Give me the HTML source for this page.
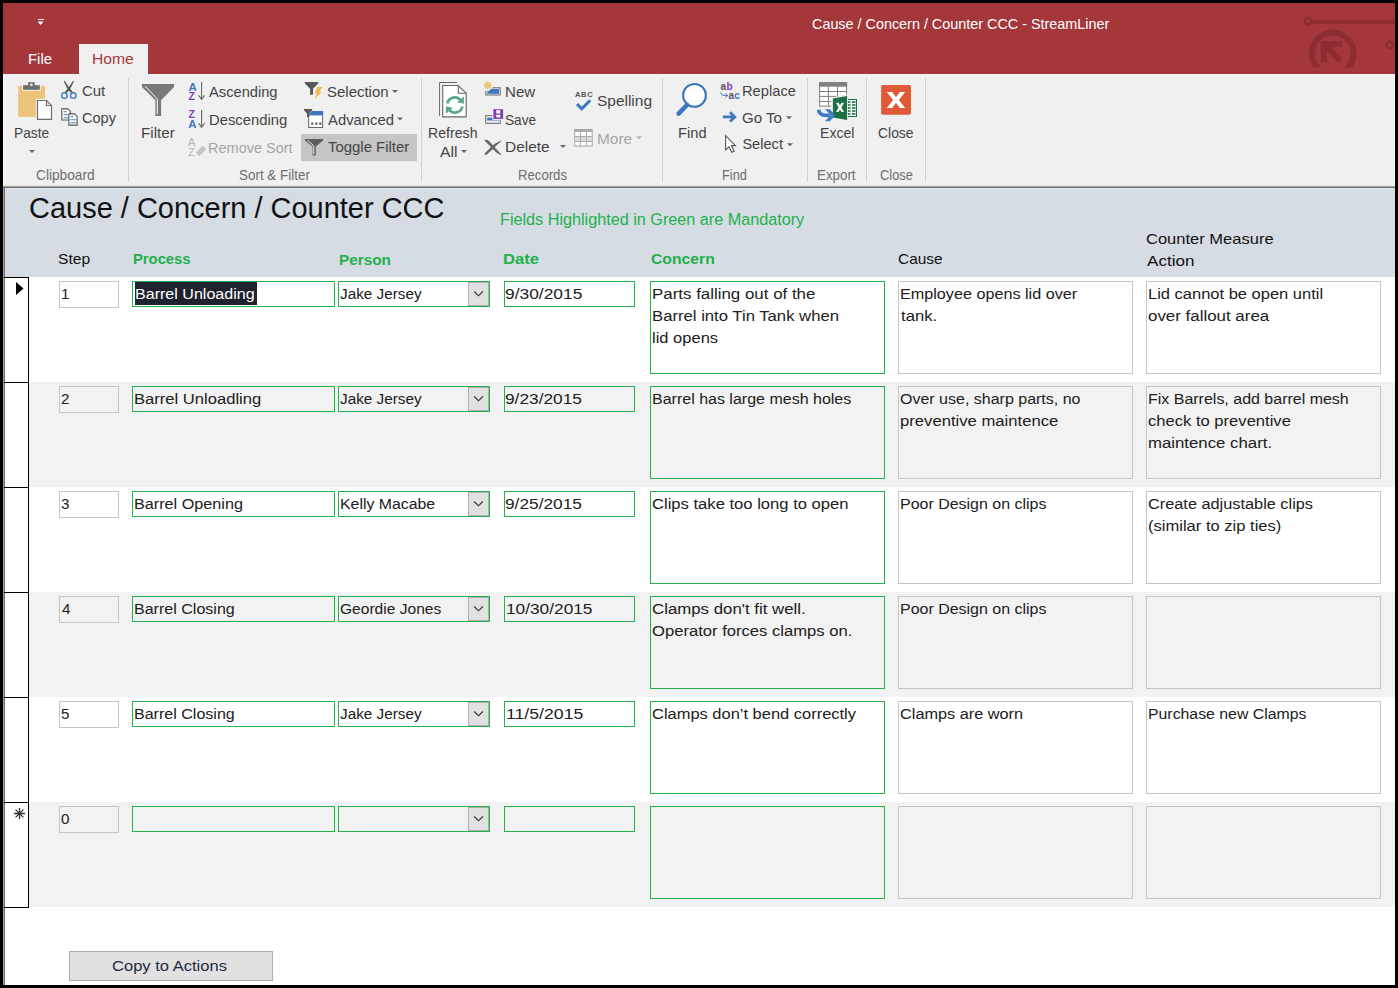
<!DOCTYPE html>
<html><head><meta charset="utf-8"><style>
html,body{margin:0;padding:0;}
body{width:1398px;height:988px;background:#000;position:relative;overflow:hidden;font-family:"Liberation Sans",sans-serif;}
.t{position:absolute;white-space:nowrap;line-height:1;transform-origin:0 0;}
.s{}
.b{position:absolute;box-sizing:border-box;}
svg.b{overflow:visible;}
</style></head><body>
<div class="b" style="left:3px;top:3px;width:1392px;height:71px;background:#A4373A;"></div>
<div class="b" style="left:38px;top:19px;width:6px;height:1px;background:#FFFFFF;"></div>
<svg class="b" style="left:37px;top:21px" width="8" height="5"><path d="M0.5 0.5 H6.5 L3.5 4 Z" fill="#fff"/></svg>
<div class="t" style="left:812.20px;top:17px;font-size:14.5px;color:#FFFFFF;transform:scaleX(0.9915);">Cause / Concern / Counter CCC - StreamLiner</div>
<svg class="b" style="left:1295px;top:10px" width="100" height="64">
<defs><clipPath id="cpa"><rect x="0" y="0" width="100" height="57.5"/></clipPath></defs>
<circle cx="13.2" cy="11.2" r="3.3" fill="none" stroke="#8E2D31" stroke-width="2.4"/>
<rect x="16.3" y="9.8" width="84" height="4" fill="#8E2D31"/>
<circle cx="37.7" cy="43.4" r="20.8" fill="none" stroke="#8E2D31" stroke-width="6" clip-path="url(#cpa)"/>
<rect x="25.8" y="31.2" width="6" height="21.3" fill="#8E2D31"/>
<rect x="25.8" y="31.2" width="21.2" height="6" fill="#8E2D31"/>
<path d="M29 34.3 L45.2 50.5" stroke="#8E2D31" stroke-width="6"/>
<circle cx="94.7" cy="34.8" r="3.3" fill="none" stroke="#8E2D31" stroke-width="2.4"/>
</svg>
<div class="t" style="left:28.42px;top:52px;font-size:14.8px;color:#FFFFFF;transform:scaleX(1.0087);">File</div>
<div class="b" style="left:79px;top:44px;width:69px;height:31px;background:#F0F0F0;"></div>
<div class="t" style="left:91.56px;top:52px;font-size:14.8px;color:#A4373A;transform:scaleX(1.0570);">Home</div>
<div class="b" style="left:3px;top:74px;width:1392px;height:114px;background:#F0F0F0;"></div>
<div class="b" style="left:3px;top:74px;width:1px;height:111px;background:#FFFFFF;"></div>
<div class="b" style="left:1394px;top:74px;width:1px;height:111px;background:#FFFFFF;"></div>
<div class="b" style="left:3px;top:185px;width:1392px;height:1px;background:#E4E4E2;"></div>
<div class="b" style="left:3px;top:186px;width:1392px;height:1px;background:#A5A5A0;"></div>
<div class="b" style="left:3px;top:187px;width:1392px;height:1px;background:#6B6D70;"></div>
<div class="b" style="left:128px;top:78px;width:1px;height:104px;background:#D2D2D2;"></div>
<div class="b" style="left:421px;top:78px;width:1px;height:104px;background:#D2D2D2;"></div>
<div class="b" style="left:662px;top:78px;width:1px;height:104px;background:#D2D2D2;"></div>
<div class="b" style="left:807px;top:78px;width:1px;height:104px;background:#D2D2D2;"></div>
<div class="b" style="left:866px;top:78px;width:1px;height:104px;background:#D2D2D2;"></div>
<div class="b" style="left:925px;top:78px;width:1px;height:104px;background:#D2D2D2;"></div>
<div class="t" style="left:35.60px;top:168px;font-size:14.6px;color:#6E6E6E;transform:scaleX(0.9376);">Clipboard</div>
<div class="t" style="left:239.20px;top:168px;font-size:14.6px;color:#6E6E6E;transform:scaleX(0.9201);">Sort &amp; Filter</div>
<div class="t" style="left:517.70px;top:168px;font-size:14.6px;color:#6E6E6E;transform:scaleX(0.9013);">Records</div>
<div class="t" style="left:722.37px;top:168px;font-size:14.6px;color:#6E6E6E;transform:scaleX(0.8746);">Find</div>
<div class="t" style="left:817.49px;top:168px;font-size:14.6px;color:#6E6E6E;transform:scaleX(0.9146);">Export</div>
<div class="t" style="left:879.60px;top:168px;font-size:14.6px;color:#6E6E6E;transform:scaleX(0.8837);">Close</div>
<div class="b" style="left:301px;top:134px;width:116px;height:27px;background:#C5C5C5;"></div>
<div class="t" style="left:14.27px;top:126px;font-size:14.6px;color:#444444;transform:scaleX(0.9396);">Paste</div>
<div class="t" style="left:82.20px;top:84px;font-size:14.6px;color:#444444;transform:scaleX(1.0184);">Cut</div>
<div class="t" style="left:82.20px;top:111px;font-size:14.6px;color:#444444;transform:scaleX(0.9968);">Copy</div>
<div class="t" style="left:140.58px;top:126px;font-size:14.6px;color:#444444;transform:scaleX(1.0392);">Filter</div>
<div class="t" style="left:209.00px;top:85px;font-size:14.6px;color:#444444;transform:scaleX(1.0056);">Ascending</div>
<div class="t" style="left:208.99px;top:113px;font-size:14.6px;color:#444444;transform:scaleX(1.0138);">Descending</div>
<div class="t" style="left:208.00px;top:141px;font-size:14.6px;color:#A6A6A6;transform:scaleX(0.9940);">Remove Sort</div>
<div class="t" style="left:326.60px;top:85px;font-size:14.6px;color:#444444;transform:scaleX(1.0257);">Selection</div>
<div class="t" style="left:327.60px;top:113px;font-size:14.6px;color:#444444;transform:scaleX(1.0156);">Advanced</div>
<div class="t" style="left:328.00px;top:140px;font-size:14.6px;color:#444444;transform:scaleX(1.0223);">Toggle Filter</div>
<div class="t" style="left:428.05px;top:126px;font-size:14.6px;color:#444444;transform:scaleX(0.9687);">Refresh</div>
<div class="t" style="left:439.80px;top:145px;font-size:14.6px;color:#444444;transform:scaleX(1.0787);">All</div>
<div class="t" style="left:505.39px;top:85px;font-size:14.6px;color:#444444;transform:scaleX(1.0338);">New</div>
<div class="t" style="left:505.40px;top:113px;font-size:14.6px;color:#444444;transform:scaleX(0.9363);">Save</div>
<div class="t" style="left:505.35px;top:140px;font-size:14.6px;color:#444444;transform:scaleX(1.0568);">Delete</div>
<div class="t" style="left:597.20px;top:94px;font-size:14.6px;color:#444444;transform:scaleX(1.0592);">Spelling</div>
<div class="t" style="left:597.14px;top:132px;font-size:14.6px;color:#A6A6A6;transform:scaleX(1.0581);">More</div>
<div class="t" style="left:677.62px;top:126px;font-size:14.6px;color:#444444;transform:scaleX(1.0057);">Find</div>
<div class="t" style="left:742.40px;top:84px;font-size:14.6px;color:#444444;transform:scaleX(1.0072);">Replace</div>
<div class="t" style="left:742.40px;top:111px;font-size:14.6px;color:#444444;transform:scaleX(1.0333);">Go To</div>
<div class="t" style="left:742.40px;top:137px;font-size:14.6px;color:#444444;">Select</div>
<div class="t" style="left:819.66px;top:126px;font-size:14.6px;color:#444444;transform:scaleX(0.9644);">Excel</div>
<div class="t" style="left:877.80px;top:126px;font-size:14.6px;color:#444444;transform:scaleX(0.9532);">Close</div>
<svg class="b" style="left:0;top:0" width="1398" height="190" viewBox="0 0 1398 190">
<!-- Paste -->
<rect x="18.2" y="85.9" width="26.8" height="31" fill="#EBC47A"/>
<rect x="22.2" y="84.4" width="18.6" height="6.4" fill="#F0F0F0"/>
<rect x="23.1" y="85.2" width="16.7" height="4.6" fill="#6E6E6E"/>
<rect x="28.2" y="82.2" width="6.5" height="4" fill="#6E6E6E"/>
<rect x="30.3" y="83.6" width="2.3" height="2.3" fill="#F5F5F5"/>
<path d="M35.8 98.8 H47 L53.2 105 V121 H35.8 Z" fill="#F0F0F0"/>
<path d="M37.5 100.5 H46.5 L51.5 105.5 V119.3 H37.5 Z" fill="#fff" stroke="#6E6E6E" stroke-width="1.2"/>
<path d="M46.5 100.5 V105.5 H51.5" fill="none" stroke="#6E6E6E" stroke-width="1.2"/>
<path d="M29 150 H35 L32 153 Z" fill="#666"/>
<!-- Cut -->
<path d="M63.6 81 L64.8 81 L69.6 88.2 L73.2 92.6 L71.6 93.4 L67.8 89.4 Z" fill="#555"/>
<path d="M74.1 81 L72.9 81 L68.1 88.2 L64.5 92.6 L66.1 93.4 L69.9 89.4 Z" fill="#555"/>
<circle cx="64.4" cy="95.6" r="2.8" fill="none" stroke="#3F7EC4" stroke-width="1.4"/>
<circle cx="73.3" cy="95.6" r="2.8" fill="none" stroke="#3F7EC4" stroke-width="1.4"/>
<!-- Copy -->
<path d="M61.8 108.9 H67.8 L70.3 111.4 V120 H61.8 Z" fill="#fff" stroke="#555" stroke-width="1.1"/>
<path d="M63.5 111.8 H66.5 M63.5 114.8 H68.5 M63.5 117.8 H68.5" stroke="#3F7EC4" stroke-width="1.1"/>
<path d="M68.9 113.9 H74.6 L77.1 116.4 V125.1 H68.9 Z" fill="#fff" stroke="#555" stroke-width="1.1"/>
<path d="M70.5 116.8 H73.5 M70.5 119.8 H75.8 M70.5 122.8 H75.8" stroke="#3F7EC4" stroke-width="1.1"/>
<!-- Filter -->
<path d="M142 84 H174 V87 L161.1 100.2 V116 H155.4 V100.2 L142 87 Z" fill="#787878"/>
<path d="M145 86.2 L157.3 99 V114.2" fill="none" stroke="#fff" stroke-width="1"/>
<!-- Ascending -->
<text x="188.4" y="90.6" font-family="Liberation Sans" font-weight="bold" font-size="11.5" fill="#3A77BD">A</text>
<text x="188.6" y="99.8" font-family="Liberation Sans" font-weight="bold" font-size="10.5" fill="#8A3AB9">Z</text>
<path d="M201.6 82 V99" stroke="#666" stroke-width="1.1"/>
<path d="M198.6 95.3 L201.6 99.3 L204.6 95.3" fill="none" stroke="#666" stroke-width="1.1"/>
<!-- Descending -->
<text x="188.6" y="118" font-family="Liberation Sans" font-weight="bold" font-size="10.5" fill="#8A3AB9">Z</text>
<text x="188.2" y="127.8" font-family="Liberation Sans" font-weight="bold" font-size="11.5" fill="#3A77BD">A</text>
<path d="M201.6 110 V127" stroke="#666" stroke-width="1.1"/>
<path d="M198.6 123.3 L201.6 127.3 L204.6 123.3" fill="none" stroke="#666" stroke-width="1.1"/>
<!-- Remove sort -->
<text x="188" y="146.4" font-family="Liberation Sans" font-size="11" fill="#B4B4B4">A</text>
<text x="188.3" y="156" font-family="Liberation Sans" font-size="10.5" fill="#B4B4B4">Z</text>
<path d="M197.5 154.5 L204.5 147.5" stroke="#C4C4C4" stroke-width="4.6"/>
<!-- Selection -->
<path d="M304.9 82.1 H318.2 V83.5 L313 88.8 V94.8 H310.1 V88.8 L304.9 83.5 Z" fill="#585858"/>
<path d="M317.6 87 H322.6 L319.4 91.8 H321.6 L314.4 99.8 L316.8 93.4 H314.8 Z" fill="#F2B84B"/>
<path d="M392 89.9 H398 L395 92.9 Z" fill="#666"/>
<!-- Advanced -->
<rect x="308.6" y="111.5" width="14" height="16" fill="#fff" stroke="#666" stroke-width="1"/>
<rect x="309" y="111" width="14" height="4.4" fill="#3C77BD"/>
<path d="M303.5 108.5 H313 V110 L308 115 V117.5 H306.5 V115 L303.5 111.5 Z" fill="#F0F0F0"/>
<path d="M304 109 H312.2 V110.3 L309.2 113.5 V117 H307 V113.5 L304 110.3 Z" fill="#585858"/>
<rect x="311.2" y="122.5" width="2.2" height="2.2" fill="#555"/>
<rect x="315.2" y="122.5" width="2.2" height="2.2" fill="#555"/>
<rect x="319.2" y="122.5" width="2.2" height="2.2" fill="#555"/>
<path d="M397 117.4 H403 L400 120.4 Z" fill="#666"/>
<!-- Toggle filter -->
<path d="M304.9 138.9 H323.1 V140.5 L315.8 146.4 V155.5 H312.6 V146.4 L304.9 140.5 Z" fill="#5E5E5E"/>
<path d="M307.5 140.2 L313.8 145.9 V154.3" fill="none" stroke="#fff" stroke-width="0.9"/>
<!-- Refresh -->
<path d="M439.6 115.9 V82.5 H456.9" fill="none" stroke="#666" stroke-width="1"/>
<path d="M440.2 83.2 H457.5 V84 H441 V116 H440.2 Z" fill="#F0F0F0"/><path d="M442.7 85.5 H458.3 L466.2 93.3 V116.9 H442.7 Z" fill="#fff" stroke="#666" stroke-width="1.1"/>
<path d="M458.3 85.5 V93.3 H466.2" fill="none" stroke="#666" stroke-width="1.1"/>
<path d="M447.3 103.6 A7.6 7.6 0 0 1 461 100.8" fill="none" stroke="#5BA68D" stroke-width="2.7"/>
<path d="M457 102.2 L463.9 103.7 L463.9 96.3 Z" fill="#5BA68D"/>
<path d="M462.5 106.5 A7.6 7.6 0 0 1 448.8 109.2" fill="none" stroke="#5BA68D" stroke-width="2.7"/>
<path d="M452.8 107.8 L445.9 106.3 L445.9 113.7 Z" fill="#5BA68D"/>
<path d="M461 150 H467 L464 153 Z" fill="#666"/>
<!-- New -->
<rect x="485.8" y="87.8" width="14.4" height="7.2" fill="none" stroke="#666" stroke-width="1"/>
<rect x="487.3" y="89" width="11.7" height="4.8" fill="#3D77BD"/>
<path d="M482 79 H492.5 V87.5 L489 91 H482 Z" fill="#F0F0F0"/>
<g stroke="#EFC06E" stroke-width="1.5"><path d="M487.7 81.2 V89.4 M483.6 85.3 H491.8 M484.9 82.5 L490.5 88.1 M490.5 82.5 L484.9 88.1"/></g>
<!-- Save -->
<rect x="485.8" y="115.7" width="14.4" height="7.6" fill="none" stroke="#666" stroke-width="1"/>
<rect x="487.3" y="117.7" width="11.7" height="2.8" fill="#3D77BD"/>
<rect x="492.4" y="108.2" width="11.7" height="11.7" fill="#F0F0F0"/>
<rect x="493.4" y="109.2" width="9.7" height="9.7" fill="#7B3FB8"/>
<rect x="496.3" y="110.2" width="4" height="3.3" fill="#fff"/>
<rect x="496.3" y="114.8" width="4" height="2.6" fill="#fff"/>
<!-- Delete -->
<path d="M484.2 140.2 C486 139.2 487.5 139.6 489 141 L502 155.2 C499.5 154.6 497.5 153.6 495.8 152 Z" fill="#666"/>
<path d="M502.2 140.6 C498 141.4 494 144 490.5 147.5 L484.8 153.2 C484.2 154.6 485.4 155.4 486.8 154.6 L492.8 149.2 C496 146 499 143 502.2 140.6 Z" fill="#666"/>
<path d="M560 145 H566 L563 148 Z" fill="#666"/>
<!-- Spelling -->
<text x="575" y="96.8" font-family="Liberation Sans" font-weight="bold" font-size="7.6" fill="#555" letter-spacing="0.6">ABC</text>
<path d="M577 104 L581.8 108.8 L590.2 100.3" fill="none" stroke="#3D77BD" stroke-width="3"/>
<!-- More -->
<rect x="574.7" y="129.6" width="17.5" height="16.5" fill="#FBFBFB" stroke="#A6A6A6" stroke-width="1"/>
<rect x="574.7" y="129.4" width="17.5" height="2.4" fill="#A6A6A6"/>
<rect x="575.2" y="136.5" width="16.5" height="5" fill="#DADADA"/>
<path d="M575 136.5 H592 M575 141.5 H592 M580.5 131 V146 M586.4 131 V146" stroke="#A6A6A6" stroke-width="0.9"/>
<path d="M636 136.3 H642 L639 139.3 Z" fill="#B4B4B4"/>
<!-- Find -->
<circle cx="694.5" cy="95.4" r="11.4" fill="#fff" stroke="#3B78BE" stroke-width="2.1"/>
<path d="M678.6 113.6 L687 105" stroke="#3B78BE" stroke-width="4.6" stroke-linecap="round"/>
<!-- Replace -->
<text x="720.5" y="89.7" font-family="Liberation Sans" font-weight="bold" font-size="10" fill="#555">a</text>
<text x="726.6" y="89.7" font-family="Liberation Sans" font-weight="bold" font-size="10" fill="#8A3AB9">b</text>
<text x="728.6" y="98.6" font-family="Liberation Sans" font-weight="bold" font-size="10" fill="#555">a</text>
<text x="734.2" y="98.6" font-family="Liberation Sans" font-weight="bold" font-size="10" fill="#3D77BD">c</text>
<path d="M720.8 92.5 Q721.2 95.4 724 95.4 H727.5" fill="none" stroke="#3D77BD" stroke-width="1"/>
<path d="M725.5 93.3 L727.7 95.4 L725.5 97.5" fill="none" stroke="#3D77BD" stroke-width="1"/>
<!-- Go To -->
<path d="M722.8 116.9 H734.5" stroke="#3D77BD" stroke-width="2.8"/>
<path d="M730 112.3 L734.8 116.9 L730 121.5" fill="none" stroke="#3D77BD" stroke-width="2.8"/>
<path d="M786 116.2 H792 L789 119.2 Z" fill="#666"/>
<!-- Select -->
<path d="M725.6 135.6 V150 L729 146.7 L731.8 152.3 L734.2 151.2 L731.5 145.6 H735.4 Z" fill="#fff" stroke="#555" stroke-width="1.1" stroke-linejoin="miter"/>
<path d="M787 143.3 H793 L790 146.3 Z" fill="#666"/>
<!-- Excel -->
<rect x="819.6" y="82.7" width="27" height="23.4" fill="#fff" stroke="#7F7F7F" stroke-width="1"/>
<rect x="819.1" y="82.2" width="28" height="4.5" fill="#7F7F7F"/>
<path d="M819.5 91.5 H847 M819.5 96.4 H847 M819.5 101.5 H847 M828.4 86.5 V106 M837.5 86.5 V106" stroke="#7F7F7F" stroke-width="1"/>
<rect x="846.5" y="98.5" width="11" height="19" fill="#F0F0F0"/>
<rect x="847" y="99.5" width="9.5" height="17" fill="#fff" stroke="#1D7044" stroke-width="1"/>
<g fill="#1D7044"><rect x="848" y="101.2" width="2.6" height="1.6"/><rect x="852" y="101.2" width="3.6" height="1.6"/><rect x="848" y="104.2" width="2.6" height="1.6"/><rect x="852" y="104.2" width="3.6" height="1.6"/><rect x="848" y="107.2" width="2.6" height="1.6"/><rect x="852" y="107.2" width="3.6" height="1.6"/><rect x="848" y="110.2" width="2.6" height="1.6"/><rect x="852" y="110.2" width="3.6" height="1.6"/><rect x="848" y="113.2" width="2.6" height="1.6"/><rect x="852" y="113.2" width="3.6" height="1.6"/></g>
<path d="M831 97.5 L848 94.5 V121 L831 118.6 Z" fill="#F0F0F0"/>
<path d="M832.9 98.5 L847.1 95.9 V119.9 L832.9 117.6 Z" fill="#1D7044"/>
<path d="M836 102.8 H838.6 L840 105.6 L841.4 102.8 H844 L841.4 107.4 L844 112 H841.4 L840 109.2 L838.6 112 H836 L838.6 107.4 Z" fill="#fff"/>
<path d="M818.6 109.8 Q819.2 115.4 826 115.4 H830" fill="none" stroke="#3D7ABF" stroke-width="3.6"/>
<path d="M825 109.2 L830.8 115.3 L825 121.2 H829.8 L835.2 115.3 L829.8 109.2 Z" fill="#3D7ABF"/>
<!-- Close -->
<rect x="881.1" y="84.9" width="29.9" height="29.9" rx="1.8" fill="#DF5A35"/>
<path d="M886.9 91.9 H892.2 L896 97.3 L899.8 91.9 H905.1 L898.9 100 L905.1 108.1 H899.8 L896 102.7 L892.2 108.1 H886.9 L893.1 100 Z" fill="#fff"/>
</svg>

<div class="b" style="left:3px;top:188px;width:1px;height:797px;background:#A0A0A0;"></div>
<div class="b" style="left:4px;top:188px;width:1px;height:797px;background:#6D6D6D;"></div>
<div class="b" style="left:5px;top:188px;width:1390px;height:797px;background:#FFFFFF;"></div>
<div class="b" style="left:5px;top:188px;width:1390px;height:89px;background:#D6DCE4;"></div>
<div class="b" style="left:5px;top:188px;width:1390px;height:1px;background:#E2E6EC;"></div>
<div class="t" style="left:28.99px;top:194px;font-size:28.8px;color:#111111;transform:scaleX(1.0060);">Cause / Concern / Counter CCC</div>
<div class="t" style="left:500.39px;top:212px;font-size:16px;color:#22B14C;transform:scaleX(1.0120);">Fields Highlighted in Green are Mandatory</div>
<div class="t s" style="left:58.20px;top:251px;font-size:15px;color:#111111;transform:scaleX(1.0434);">Step</div>
<div class="t" style="left:132.60px;top:252px;font-size:14.5px;color:#22B14C;font-weight:bold;transform:scaleX(1.0194);">Process</div>
<div class="t" style="left:339.00px;top:253px;font-size:14.5px;color:#22B14C;font-weight:bold;transform:scaleX(1.0561);">Person</div>
<div class="t" style="left:503.40px;top:252px;font-size:14.5px;color:#22B14C;font-weight:bold;transform:scaleX(1.1435);">Date</div>
<div class="t" style="left:650.60px;top:252px;font-size:14.5px;color:#22B14C;font-weight:bold;transform:scaleX(1.0839);">Concern</div>
<div class="t s" style="left:898.00px;top:251px;font-size:15px;color:#111111;transform:scaleX(1.0290);">Cause</div>
<div class="t s" style="left:1146.20px;top:231px;font-size:15px;color:#111111;transform:scaleX(1.1009);">Counter Measure</div>
<div class="t s" style="left:1147.20px;top:253px;font-size:15px;color:#111111;transform:scaleX(1.1373);">Action</div>
<div class="b" style="left:29px;top:277px;width:1366px;height:105px;background:#FFFFFF;"></div>
<div class="b" style="left:4px;top:277px;width:25px;height:1px;background:#000000;"></div>
<div class="b" style="left:28px;top:277px;width:1px;height:106px;background:#000000;"></div>
<div class="b" style="left:5px;top:278px;width:23px;height:104px;background:#FFFFFF;"></div>
<div class="b" style="left:59px;top:281px;width:60px;height:27px;background:#FFFFFF;border:1px solid #C6C6C6;"></div>
<div class="b" style="left:132px;top:281px;width:203px;height:26px;background:#FFFFFF;border:1px solid #22B14C;"></div>
<div class="b" style="left:338px;top:281px;width:152px;height:26px;background:#FFFFFF;border:1px solid #22B14C;"></div>
<div class="b" style="left:468px;top:282px;width:21px;height:24px;background:#E1E1E1;border:1px solid #ADADAD;"></div>
<svg class="b" style="left:468px;top:282px" width="21" height="24"><path d="M6.2 9.5 L10.5 13.8 L14.8 9.5" fill="none" stroke="#333" stroke-width="1.15"/></svg>
<div class="b" style="left:504px;top:281px;width:131px;height:26px;background:#FFFFFF;border:1px solid #22B14C;"></div>
<div class="b" style="left:650px;top:281px;width:235px;height:93px;background:#FFFFFF;border:1px solid #22B14C;"></div>
<div class="b" style="left:898px;top:281px;width:235px;height:93px;background:#FFFFFF;border:1px solid #C6C6C6;"></div>
<div class="b" style="left:1146px;top:281px;width:235px;height:93px;background:#FFFFFF;border:1px solid #C6C6C6;"></div>
<div class="t s" style="left:61.00px;top:286px;font-size:15.2px;color:#202020;">1</div>
<div class="b" style="left:135px;top:282px;width:122px;height:23px;background:#1F2330;"></div>
<div class="t s" style="left:135.33px;top:286px;font-size:15.2px;color:#FFFFFF;transform:scaleX(1.0572);">Barrel Unloading</div>
<div class="t s" style="left:340.20px;top:286px;font-size:15.2px;color:#202020;transform:scaleX(1.0072);">Jake Jersey</div>
<div class="t s" style="left:505.00px;top:286px;font-size:15.2px;color:#202020;transform:scaleX(1.1445);">9/30/2015</div>
<div class="t s" style="left:651.89px;top:286px;font-size:15.2px;color:#202020;transform:scaleX(1.1124);">Parts falling out of the</div>
<div class="t s" style="left:651.91px;top:308px;font-size:15.2px;color:#202020;transform:scaleX(1.0983);">Barrel into Tin Tank when</div>
<div class="t s" style="left:651.94px;top:330px;font-size:15.2px;color:#202020;transform:scaleX(1.0868);">lid opens</div>
<div class="t s" style="left:899.93px;top:286px;font-size:15.2px;color:#202020;transform:scaleX(1.0650);">Employee opens lid over</div>
<div class="t s" style="left:901.00px;top:308px;font-size:15.2px;color:#202020;transform:scaleX(1.0980);">tank.</div>
<div class="t s" style="left:1147.92px;top:286px;font-size:15.2px;color:#202020;transform:scaleX(1.0856);">Lid cannot be open until</div>
<div class="t s" style="left:1148.00px;top:308px;font-size:15.2px;color:#202020;transform:scaleX(1.1129);">over fallout area</div>
<div class="b" style="left:29px;top:382px;width:1366px;height:105px;background:#F2F2F2;"></div>
<div class="b" style="left:4px;top:382px;width:25px;height:1px;background:#000000;"></div>
<div class="b" style="left:28px;top:382px;width:1px;height:106px;background:#000000;"></div>
<div class="b" style="left:5px;top:383px;width:23px;height:104px;background:#FFFFFF;"></div>
<div class="b" style="left:59px;top:386px;width:60px;height:27px;background:#F2F2F2;border:1px solid #C6C6C6;"></div>
<div class="b" style="left:132px;top:386px;width:203px;height:26px;background:#F2F2F2;border:1px solid #22B14C;"></div>
<div class="b" style="left:338px;top:386px;width:152px;height:26px;background:#F2F2F2;border:1px solid #22B14C;"></div>
<div class="b" style="left:468px;top:387px;width:21px;height:24px;background:#E1E1E1;border:1px solid #ADADAD;"></div>
<svg class="b" style="left:468px;top:387px" width="21" height="24"><path d="M6.2 9.5 L10.5 13.8 L14.8 9.5" fill="none" stroke="#333" stroke-width="1.15"/></svg>
<div class="b" style="left:504px;top:386px;width:131px;height:26px;background:#F2F2F2;border:1px solid #22B14C;"></div>
<div class="b" style="left:650px;top:386px;width:235px;height:93px;background:#F2F2F2;border:1px solid #22B14C;"></div>
<div class="b" style="left:898px;top:386px;width:235px;height:93px;background:#F2F2F2;border:1px solid #C6C6C6;"></div>
<div class="b" style="left:1146px;top:386px;width:235px;height:93px;background:#F2F2F2;border:1px solid #C6C6C6;"></div>
<div class="t s" style="left:61.00px;top:391px;font-size:15.2px;color:#202020;">2</div>
<div class="t s" style="left:134.11px;top:391px;font-size:15.2px;color:#202020;transform:scaleX(1.0917);">Barrel Unloadling</div>
<div class="t s" style="left:340.20px;top:391px;font-size:15.2px;color:#202020;transform:scaleX(1.0072);">Jake Jersey</div>
<div class="t s" style="left:505.00px;top:391px;font-size:15.2px;color:#202020;transform:scaleX(1.1386);">9/23/2015</div>
<div class="t s" style="left:651.95px;top:391px;font-size:15.2px;color:#202020;transform:scaleX(1.0536);">Barrel has large mesh holes</div>
<div class="t s" style="left:900.00px;top:391px;font-size:15.2px;color:#202020;transform:scaleX(1.0532);">Over use, sharp parts, no</div>
<div class="t s" style="left:900.00px;top:413px;font-size:15.2px;color:#202020;transform:scaleX(1.0966);">preventive maintence</div>
<div class="t s" style="left:1147.95px;top:391px;font-size:15.2px;color:#202020;transform:scaleX(1.0523);">Fix Barrels, add barrel mesh</div>
<div class="t s" style="left:1148.00px;top:413px;font-size:15.2px;color:#202020;transform:scaleX(1.0920);">check to preventive</div>
<div class="t s" style="left:1147.89px;top:435px;font-size:15.2px;color:#202020;transform:scaleX(1.1049);">maintence chart.</div>
<div class="b" style="left:29px;top:487px;width:1366px;height:105px;background:#FFFFFF;"></div>
<div class="b" style="left:4px;top:487px;width:25px;height:1px;background:#000000;"></div>
<div class="b" style="left:28px;top:487px;width:1px;height:106px;background:#000000;"></div>
<div class="b" style="left:5px;top:488px;width:23px;height:104px;background:#FFFFFF;"></div>
<div class="b" style="left:59px;top:491px;width:60px;height:27px;background:#FFFFFF;border:1px solid #C6C6C6;"></div>
<div class="b" style="left:132px;top:491px;width:203px;height:26px;background:#FFFFFF;border:1px solid #22B14C;"></div>
<div class="b" style="left:338px;top:491px;width:152px;height:26px;background:#FFFFFF;border:1px solid #22B14C;"></div>
<div class="b" style="left:468px;top:492px;width:21px;height:24px;background:#E1E1E1;border:1px solid #ADADAD;"></div>
<svg class="b" style="left:468px;top:492px" width="21" height="24"><path d="M6.2 9.5 L10.5 13.8 L14.8 9.5" fill="none" stroke="#333" stroke-width="1.15"/></svg>
<div class="b" style="left:504px;top:491px;width:131px;height:26px;background:#FFFFFF;border:1px solid #22B14C;"></div>
<div class="b" style="left:650px;top:491px;width:235px;height:93px;background:#FFFFFF;border:1px solid #22B14C;"></div>
<div class="b" style="left:898px;top:491px;width:235px;height:93px;background:#FFFFFF;border:1px solid #C6C6C6;"></div>
<div class="b" style="left:1146px;top:491px;width:235px;height:93px;background:#FFFFFF;border:1px solid #C6C6C6;"></div>
<div class="t s" style="left:61.00px;top:496px;font-size:15.2px;color:#202020;">3</div>
<div class="t s" style="left:134.14px;top:496px;font-size:15.2px;color:#202020;transform:scaleX(1.0665);">Barrel Opening</div>
<div class="t s" style="left:340.14px;top:496px;font-size:15.2px;color:#202020;transform:scaleX(1.0436);">Kelly Macabe</div>
<div class="t s" style="left:505.00px;top:496px;font-size:15.2px;color:#202020;transform:scaleX(1.1386);">9/25/2015</div>
<div class="t s" style="left:652.00px;top:496px;font-size:15.2px;color:#202020;transform:scaleX(1.0926);">Clips take too long to open</div>
<div class="t s" style="left:899.96px;top:496px;font-size:15.2px;color:#202020;transform:scaleX(1.0513);">Poor Design on clips</div>
<div class="t s" style="left:1148.00px;top:496px;font-size:15.2px;color:#202020;transform:scaleX(1.0738);">Create adjustable clips</div>
<div class="t s" style="left:1148.00px;top:518px;font-size:15.2px;color:#202020;transform:scaleX(1.0894);">(similar to zip ties)</div>
<div class="b" style="left:29px;top:592px;width:1366px;height:105px;background:#F2F2F2;"></div>
<div class="b" style="left:4px;top:592px;width:25px;height:1px;background:#000000;"></div>
<div class="b" style="left:28px;top:592px;width:1px;height:106px;background:#000000;"></div>
<div class="b" style="left:5px;top:593px;width:23px;height:104px;background:#FFFFFF;"></div>
<div class="b" style="left:59px;top:596px;width:60px;height:27px;background:#F2F2F2;border:1px solid #C6C6C6;"></div>
<div class="b" style="left:132px;top:596px;width:203px;height:26px;background:#F2F2F2;border:1px solid #22B14C;"></div>
<div class="b" style="left:338px;top:596px;width:152px;height:26px;background:#F2F2F2;border:1px solid #22B14C;"></div>
<div class="b" style="left:468px;top:597px;width:21px;height:24px;background:#E1E1E1;border:1px solid #ADADAD;"></div>
<svg class="b" style="left:468px;top:597px" width="21" height="24"><path d="M6.2 9.5 L10.5 13.8 L14.8 9.5" fill="none" stroke="#333" stroke-width="1.15"/></svg>
<div class="b" style="left:504px;top:596px;width:131px;height:26px;background:#F2F2F2;border:1px solid #22B14C;"></div>
<div class="b" style="left:650px;top:596px;width:235px;height:93px;background:#F2F2F2;border:1px solid #22B14C;"></div>
<div class="b" style="left:898px;top:596px;width:235px;height:93px;background:#F2F2F2;border:1px solid #C6C6C6;"></div>
<div class="b" style="left:1146px;top:596px;width:235px;height:93px;background:#F2F2F2;border:1px solid #C6C6C6;"></div>
<div class="t s" style="left:62.00px;top:601px;font-size:15.2px;color:#202020;">4</div>
<div class="t s" style="left:134.14px;top:601px;font-size:15.2px;color:#202020;transform:scaleX(1.0561);">Barrel Closing</div>
<div class="t s" style="left:340.20px;top:601px;font-size:15.2px;color:#202020;transform:scaleX(1.0248);">Geordie Jones</div>
<div class="t s" style="left:505.86px;top:601px;font-size:15.2px;color:#202020;transform:scaleX(1.1373);">10/30/2015</div>
<div class="t s" style="left:652.00px;top:601px;font-size:15.2px;color:#202020;transform:scaleX(1.1079);">Clamps don't fit well.</div>
<div class="t s" style="left:652.00px;top:623px;font-size:15.2px;color:#202020;transform:scaleX(1.0937);">Operator forces clamps on.</div>
<div class="t s" style="left:899.96px;top:601px;font-size:15.2px;color:#202020;transform:scaleX(1.0513);">Poor Design on clips</div>
<div class="b" style="left:29px;top:697px;width:1366px;height:105px;background:#FFFFFF;"></div>
<div class="b" style="left:4px;top:697px;width:25px;height:1px;background:#000000;"></div>
<div class="b" style="left:28px;top:697px;width:1px;height:106px;background:#000000;"></div>
<div class="b" style="left:5px;top:698px;width:23px;height:104px;background:#FFFFFF;"></div>
<div class="b" style="left:59px;top:701px;width:60px;height:27px;background:#FFFFFF;border:1px solid #C6C6C6;"></div>
<div class="b" style="left:132px;top:701px;width:203px;height:26px;background:#FFFFFF;border:1px solid #22B14C;"></div>
<div class="b" style="left:338px;top:701px;width:152px;height:26px;background:#FFFFFF;border:1px solid #22B14C;"></div>
<div class="b" style="left:468px;top:702px;width:21px;height:24px;background:#E1E1E1;border:1px solid #ADADAD;"></div>
<svg class="b" style="left:468px;top:702px" width="21" height="24"><path d="M6.2 9.5 L10.5 13.8 L14.8 9.5" fill="none" stroke="#333" stroke-width="1.15"/></svg>
<div class="b" style="left:504px;top:701px;width:131px;height:26px;background:#FFFFFF;border:1px solid #22B14C;"></div>
<div class="b" style="left:650px;top:701px;width:235px;height:93px;background:#FFFFFF;border:1px solid #22B14C;"></div>
<div class="b" style="left:898px;top:701px;width:235px;height:93px;background:#FFFFFF;border:1px solid #C6C6C6;"></div>
<div class="b" style="left:1146px;top:701px;width:235px;height:93px;background:#FFFFFF;border:1px solid #C6C6C6;"></div>
<div class="t s" style="left:61.00px;top:706px;font-size:15.2px;color:#202020;">5</div>
<div class="t s" style="left:134.14px;top:706px;font-size:15.2px;color:#202020;transform:scaleX(1.0561);">Barrel Closing</div>
<div class="t s" style="left:340.20px;top:706px;font-size:15.2px;color:#202020;transform:scaleX(1.0072);">Jake Jersey</div>
<div class="t s" style="left:505.83px;top:706px;font-size:15.2px;color:#202020;transform:scaleX(1.1633);">11/5/2015</div>
<div class="t s" style="left:652.00px;top:706px;font-size:15.2px;color:#202020;transform:scaleX(1.0836);">Clamps don’t bend correctly</div>
<div class="t s" style="left:900.00px;top:706px;font-size:15.2px;color:#202020;transform:scaleX(1.0724);">Clamps are worn</div>
<div class="t s" style="left:1147.96px;top:706px;font-size:15.2px;color:#202020;transform:scaleX(1.0427);">Purchase new Clamps</div>
<div class="b" style="left:29px;top:802px;width:1366px;height:105px;background:#F2F2F2;"></div>
<div class="b" style="left:4px;top:802px;width:25px;height:1px;background:#000000;"></div>
<div class="b" style="left:28px;top:802px;width:1px;height:106px;background:#000000;"></div>
<div class="b" style="left:5px;top:803px;width:23px;height:104px;background:#FFFFFF;"></div>
<div class="b" style="left:59px;top:806px;width:60px;height:27px;background:#F2F2F2;border:1px solid #C6C6C6;"></div>
<div class="b" style="left:132px;top:806px;width:203px;height:26px;background:#F2F2F2;border:1px solid #22B14C;"></div>
<div class="b" style="left:338px;top:806px;width:152px;height:26px;background:#F2F2F2;border:1px solid #22B14C;"></div>
<div class="b" style="left:468px;top:807px;width:21px;height:24px;background:#E1E1E1;border:1px solid #ADADAD;"></div>
<svg class="b" style="left:468px;top:807px" width="21" height="24"><path d="M6.2 9.5 L10.5 13.8 L14.8 9.5" fill="none" stroke="#333" stroke-width="1.15"/></svg>
<div class="b" style="left:504px;top:806px;width:131px;height:26px;background:#F2F2F2;border:1px solid #22B14C;"></div>
<div class="b" style="left:650px;top:806px;width:235px;height:93px;background:#F2F2F2;border:1px solid #22B14C;"></div>
<div class="b" style="left:898px;top:806px;width:235px;height:93px;background:#F2F2F2;border:1px solid #C6C6C6;"></div>
<div class="b" style="left:1146px;top:806px;width:235px;height:93px;background:#F2F2F2;border:1px solid #C6C6C6;"></div>
<div class="t s" style="left:61.00px;top:811px;font-size:15.2px;color:#202020;">0</div>
<div class="t s" style="left:135.30px;top:811px;font-size:15.2px;color:#202020;"></div>
<div class="t s" style="left:340.30px;top:811px;font-size:15.2px;color:#202020;"></div>
<div class="t s" style="left:506.50px;top:811px;font-size:15.2px;color:#202020;transform:scaleX(1.0300);"></div>
<div class="b" style="left:4px;top:907px;width:25px;height:1px;background:#000000;"></div>
<svg class="b" style="left:15px;top:281px" width="10" height="15"><path d="M1 1 L8.5 7.5 L1 14 Z" fill="#000"/></svg>
<svg class="b" style="left:13px;top:807px" width="13" height="13"><g stroke="#333" stroke-width="1.3"><path d="M6.5 1 V12 M1 6.5 H12 M2.6 2.6 L10.4 10.4 M10.4 2.6 L2.6 10.4"/></g></svg>
<div class="b" style="left:69px;top:951px;width:204px;height:30px;background:#E1E1E1;border:1px solid #ADADAD;"></div>
<div class="t s" style="left:111.80px;top:958px;font-size:15.2px;color:#1E2B3C;transform:scaleX(1.0889);">Copy to Actions</div>
</body></html>
